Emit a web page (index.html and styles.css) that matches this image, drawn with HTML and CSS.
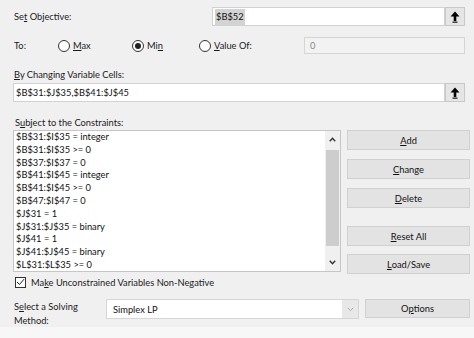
FILE: index.html
```html
<!DOCTYPE html>
<html>
<head>
<meta charset="utf-8">
<link rel="stylesheet" href="styles.css">
</head>
<body>
<div class="dlg">
  <div class="row r-obj">
    <span class="lbl w-obj">Se<u>t</u> Objective:</span>
    <div class="ref ref-obj"><span class="sel">$B$52</span></div>
    <div class="pick"><svg width="10" height="12" viewBox="0 0 10 12"><path d="M5 0.5 L9.5 5.5 H6.3 V10 H3.7 V5.5 H0.5 Z" fill="#000"/><rect x="2.5" y="10.6" width="5" height="1.1" fill="#000"/></svg></div>
  </div>
  <div class="row r-to">
    <span class="lbl w-to">To:</span>
    <span class="radio w-max"><i class="rb"></i><span><u>M</u>ax</span></span>
    <span class="radio on w-min"><i class="rb"></i><span>Mi<u>n</u></span></span>
    <span class="radio w-val"><i class="rb"></i><span><u>V</u>alue Of:</span></span>
    <div class="valbox">0</div>
  </div>
  <div class="lbl sect"><u>B</u>y Changing Variable Cells:</div>
  <div class="row r-var">
    <div class="ref ref-var">$B$31:$J$35,$B$41:$J$45</div>
    <div class="pick"><svg width="10" height="12" viewBox="0 0 10 12"><path d="M5 0.5 L9.5 5.5 H6.3 V10 H3.7 V5.5 H0.5 Z" fill="#000"/><rect x="2.5" y="10.6" width="5" height="1.1" fill="#000"/></svg></div>
  </div>
  <div class="lbl sect2">S<u>u</u>bject to the Constraints:</div>
  <div class="main">
    <div class="list">
      <ul class="items">
        <li>$B$31:$I$35 = integer</li>
        <li>$B$31:$I$35 &gt;= 0</li>
        <li>$B$37:$I$37 = 0</li>
        <li>$B$41:$I$45 = integer</li>
        <li>$B$41:$I$45 &gt;= 0</li>
        <li>$B$47:$I$47 = 0</li>
        <li>$J$31 = 1</li>
        <li>$J$31:$J$35 = binary</li>
        <li>$J$41 = 1</li>
        <li>$J$41:$J$45 = binary</li>
        <li>$L$31:$L$35 &gt;= 0</li>
      </ul>
      <div class="sb">
        <div class="sb-arrow"><svg width="7" height="5" viewBox="0 0 7 5"><path d="M0.8 4.2 L3.5 1.3 L6.2 4.2" fill="none" stroke="#333" stroke-width="1.4"/></svg></div>
        <div class="sb-track"><div class="sb-thumb"></div></div>
        <div class="sb-arrow"><svg width="7" height="5" viewBox="0 0 7 5"><path d="M0.8 0.8 L3.5 3.7 L6.2 0.8" fill="none" stroke="#333" stroke-width="1.4"/></svg></div>
      </div>
    </div>
    <div class="btns">
      <div class="btn"><u>A</u>dd</div>
      <div class="btn"><u>C</u>hange</div>
      <div class="btn"><u>D</u>elete</div>
      <div class="btn gap"><u>R</u>eset All</div>
      <div class="btn last"><u>L</u>oad/Save</div>
    </div>
  </div>
  <div class="chkrow">
    <i class="cb"><svg width="9" height="8" viewBox="0 0 9 8"><path d="M1 4 L3.5 6.5 L8 1.2" fill="none" stroke="#222" stroke-width="1"/></svg></i>
    <span>Ma<u>k</u>e Unconstrained Variables Non-Negative</span>
  </div>
  <div class="solve">
    <div class="lbl w-solve">S<u>e</u>lect a Solving<br>Method:</div>
    <div class="select"><span class="sv">Simplex LP</span><span class="dd"><svg width="7" height="5" viewBox="0 0 7 5"><path d="M0.8 0.8 L3.5 3.7 L6.2 0.8" fill="none" stroke="#aaa" stroke-width="1"/></svg></span></div>
    <div class="btn opt">O<u>p</u>tions</div>
  </div>
  <div class="foot"></div>
</div>
</body>
</html>
```

FILE: styles.css
```css
* { box-sizing: border-box; }
html, body { margin: 0; padding: 0; }
body {
  width: 474px;
  height: 338px;
  overflow: hidden;
  background: #f0f0f0;
  font-family: "Lato", "Noto Sans", sans-serif;
  font-size: 9.3px;
  color: #1a1a1a;
}
u { text-decoration: underline; text-underline-offset: 1px; }
.dlg { padding: 7px 0 0 13px; height: 338px; position: relative; }
.row { display: flex; align-items: center; }
.lbl { padding-left: 1px; }
.r-obj { height: 19px; }
.w-obj { width: 199px; }
.ref {
  height: 19px;
  background: #fff;
  border: 1px solid #d2d2d2;
  display: flex;
  align-items: center;
  padding-left: 2px;
  color: #111;
}
.ref-obj { width: 233px; }
.sel { background: #d3d3d3; padding: 2px 1px; line-height: 12px; }
.pick {
  width: 20px;
  height: 19px;
  background: #e5e5e5;
  border: 1px solid #c9c9c9;
  display: flex;
  align-items: center;
  justify-content: center;
}
.r-to { height: 17px; margin-top: 11px; }
.w-to { width: 45px; }
.radio { display: flex; align-items: center; }
.radio span { margin-left: 3px; }
.w-max { width: 74px; }
.w-min { width: 67px; }
.w-val { width: 105px; }
.rb {
  width: 12px; height: 12px;
  border: 1px solid #333;
  border-radius: 50%;
  background: #fff;
  display: inline-flex;
  align-items: center;
  justify-content: center;
}
.on .rb::after {
  content: "";
  width: 6px; height: 6px;
  border-radius: 50%;
  background: #222;
}
.valbox {
  width: 161px;
  height: 17px;
  border: 1px solid #d5d5d5;
  background: #f2f2f2;
  color: #888;
  padding-left: 5px;
  display: flex;
  align-items: center;
}
.sect { margin-top: 14px; line-height: 13px; }
.r-var { margin-top: 2px; height: 19px; }
.ref-var { width: 432px; }
.sect2 { margin-top: 14px; line-height: 13px; padding-left: 2px; }
.main { display: flex; margin-top: 1px; align-items: flex-start; }
.list {
  width: 328px;
  height: 142px;
  background: #fff;
  border: 1px solid #c6c6c6;
  display: flex;
}
.items {
  list-style: none;
  margin: 0;
  padding: 0 0 0 2px;
  flex: 1;
  line-height: 12.8px;
  color: #111;
}
.sb { width: 15px; display: flex; flex-direction: column; background: #f0f0f0; }
.sb-arrow { height: 17px; display: flex; align-items: center; justify-content: center; }
.sb-track { flex: 1; padding: 2px 1px 8px 1px; }
.sb-thumb { height: 96px; background: #cdcdcd; }
.btns { margin-left: 6px; width: 123px; display: flex; flex-direction: column; }
.btn {
  height: 20px;
  background: #e3e3e3;
  border: 1px solid #d0d0d0;
  display: flex;
  align-items: center;
  justify-content: center;
  margin-bottom: 9px;
  color: #111;
}
.btn.gap { margin-top: 9px; margin-bottom: 8px; }
.btn.last { margin-bottom: 0; }
.chkrow { display: flex; align-items: center; margin-top: 2px; height: 12px; padding-left: 2px; }
.cb {
  width: 11px; height: 11px;
  border: 1px solid #333;
  background: #fff;
  display: inline-flex;
  align-items: center;
  justify-content: center;
  margin-right: 5px;
}
.solve { display: flex; margin-top: 11px; align-items: flex-start; }
.w-solve { width: 93px; line-height: 14px; padding-top: 1px; }
.select {
  width: 253px;
  height: 20px;
  background: #fff;
  border: 1px solid #d6d6d6;
  display: flex;
  align-items: center;
}
.sv { flex: 1; padding-left: 6px; color: #111; }
.dd { width: 16px; height: 18px; background: #e8e8e8; display: flex; align-items: center; justify-content: center; }
.opt { margin-left: 6px; width: 105px; height: 19px; margin-bottom: 0; }
.foot { position: absolute; left: 0; right: 0; bottom: 0; height: 11px; background: #f7f7f7; }
```
